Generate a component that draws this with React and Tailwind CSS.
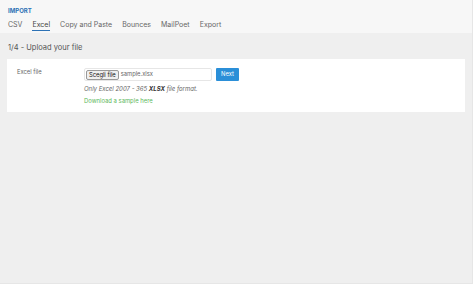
export default function App() {
  const tabs = ["CSV", "Excel", "Copy and Paste", "Bounces", "MailPoet", "Export"];
  return (
    <div className="w-[474px] h-[286px] bg-white font-['Inter',sans-serif]">
      <div className="w-[473px] h-[284px] flex flex-col border-r border-b border-[#e6e6e6]">
        <div className="bg-[#f7f7f7] h-[33px] px-[8px] pt-[7px]">
          <div className="text-[6px] font-bold text-[#2d72b5] leading-[8px]">IMPORT</div>
          <div className="flex gap-[10px] mt-[5px] text-[7px] text-[#666] leading-[9px]">
            {tabs.map((t) => (
              <div key={t} className={t === "Excel" ? "border-b border-[#2d72b5] pb-[1px] text-[#444]" : ""}>{t}</div>
            ))}
          </div>
        </div>
        <div className="flex-1 bg-[#efefef] px-[7px]">
          <div className="text-[7.5px] text-[#555] leading-[10px] pt-[10px] pb-[6px] pl-[1px]">1/4 - Upload your file</div>
          <div className="bg-white h-[53px] flex pt-[9px]">
            <div className="w-[77px] pl-[10px] text-[5.8px] text-[#666] leading-[8px]">Excel file</div>
            <div className="flex flex-col">
              <div className="flex items-center">
                <div className="w-[128px] h-[13px] border border-[#e6e6e6] rounded-[2px] flex items-center pl-[1px]">
                  <div className="h-[10px] px-[2px] border border-[#999] bg-[#efefef] rounded-[2px] text-[5.8px] text-[#111] leading-[8px] flex items-center">Scegli file</div>
                  <div className="ml-[2px] text-[5.8px] text-[#666]">sample.xlsx</div>
                </div>
                <div className="ml-[4px] h-[13px] w-[23px] bg-[#2b8fd8] rounded-[1px] text-white text-[5.8px] flex items-center justify-center">Next</div>
              </div>
              <div className="mt-[4px] text-[6px] italic text-[#666] leading-[8px]">Only Excel 2007 - 365 <b className="text-[#333]">XLSX</b> file format.</div>
              <div className="mt-[4px] text-[5.9px] text-[#5cb85c] leading-[8px]">Download a sample here</div>
            </div>
          </div>
        </div>
      </div>
    </div>
  );
}
